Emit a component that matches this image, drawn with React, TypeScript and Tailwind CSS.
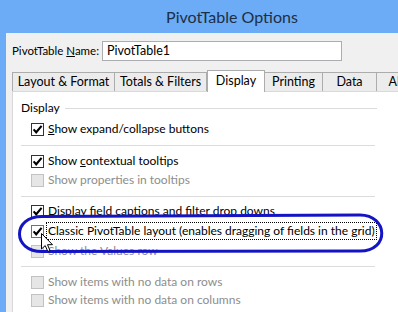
import React from "react"

const font = { fontFamily: 'Lato, "Noto Sans", sans-serif' }

function Check({ checked, disabled, focus }: { checked?: boolean; disabled?: boolean; focus?: boolean }) {
  const box = disabled
    ? "border-[#c2c2c2] bg-[#e6e6e6]"
    : focus
      ? "border-[#3c7fb1] bg-white"
      : "border-[#333333] bg-white"
  return (
    <span className={`flex h-[13px] w-[13px] shrink-0 items-center justify-center border ${box}`}>
      {checked && (
        <svg width="11" height="11" viewBox="0 0 11 11">
          <path d="M1.6 5.4 L4.2 8.3 L9.6 1.9" fill="none" stroke="#000" strokeWidth="2.1" />
        </svg>
      )}
    </span>
  )
}

function Row({
  children,
  checked,
  disabled,
  focus,
  className = "",
}: {
  children: React.ReactNode
  checked?: boolean
  disabled?: boolean
  focus?: boolean
  className?: string
}) {
  return (
    <div className={`flex h-[18px] items-center pl-[18px] ${className}`}>
      <Check checked={checked} disabled={disabled} focus={focus} />
      <span
        className={`ml-[2px] block h-[18px] whitespace-nowrap px-[2px] text-[12px] leading-[18px] ${
          disabled ? "text-[#8d8d8d]" : "text-black"
        } ${focus ? "outline outline-1 outline-dotted outline-black -outline-offset-1" : ""}`}
      >
        {children}
      </span>
    </div>
  )
}

const Sep = ({ className = "" }: { className?: string }) => (
  <div className={`ml-[8px] h-px w-[354px] bg-[#dcdcdc] ${className}`} />
)

const tabs = [
  { label: "Layout & Format", w: "w-[103px]" },
  { label: "Totals & Filters", w: "w-[92px]" },
  { label: "Display", w: "w-[58px]", active: true },
  { label: "Printing", w: "w-[58px]" },
  { label: "Data", w: "w-[54px]" },
  { label: "Alt", w: "w-[40px]" },
]

export default function App() {
  return (
    <div className="relative flex h-[312px] w-[398px] flex-col overflow-hidden bg-[#6cabf5]" style={font}>
      <div className="flex h-[33px] shrink-0 items-center justify-center pl-[66px] text-[16px] text-[#1d2f45]">
        PivotTable Options
      </div>
      <div className="ml-[6px] flex flex-1 flex-col bg-[#f0f0f0] pl-[6px] pt-[8px]">
        <div className="flex h-[20px] items-center">
          <span className="w-[87px] shrink-0 whitespace-nowrap text-[11.5px] text-black">
            PivotTable <span className="underline">N</span>ame:
          </span>
          <div className="ml-[3px] flex h-[20px] w-[240px] items-center border border-[#abadb3] bg-white pl-[4px] text-[12.5px] text-black">
            PivotTable1
          </div>
        </div>
        <div className="mt-[8px] flex h-[22px] items-end">
          {tabs.map((t) =>
            t.active ? (
              <div
                key={t.label}
                className={`relative z-10 -mb-px flex h-[22px] ${t.w} shrink-0 items-center justify-center border border-b-0 border-[#acacac] bg-white text-[12.5px] text-black`}
              >
                {t.label}
              </div>
            ) : (
              <div
                key={t.label}
                className={`flex h-[19px] ${t.w} shrink-0 items-center justify-center whitespace-nowrap border border-l-0 border-b-0 border-[#acacac] bg-[#ececec] text-[12.5px] text-black first:border-l`}
              >
                {t.label}
              </div>
            ),
          )}
        </div>
        <div className="flex flex-1 flex-col border-l border-t border-[#d9d9d9] bg-white">
          <div className="mt-[7px] flex h-[18px] items-center pl-[8px]">
            <span className="text-[12px] text-black">Display</span>
            <div className="ml-[5px] h-px w-[312px] bg-[#dcdcdc]" />
          </div>
          <Row checked className="mt-[3px]">
            <span className="underline">S</span>how expand/collapse buttons
          </Row>
          <Sep className="mt-[7px]" />
          <Row checked className="mt-[6px]">
            Show <span className="underline">c</span>ontextual tooltips
          </Row>
          <Row disabled className="mt-[1px]">
            Show properties in tooltips
          </Row>
          <Sep className="mt-[7px]" />
          <Row checked className="mt-[5px]">
            Display field captions and filter drop downs
          </Row>
          <Row checked focus className="mt-[2px]">
            Classic PivotTable layout (enables dragging of fields in the grid)
          </Row>
          <Row disabled className="mt-[2px]">
            Show the Values row
          </Row>
          <Sep className="mt-[6px]" />
          <Row disabled className="mt-[6px]">
            Show items with no data on rows
          </Row>
          <Row disabled>Show items with no data on columns</Row>
        </div>
      </div>

      {/* annotation ellipse */}
      <svg className="pointer-events-none absolute left-0 top-0" width="398" height="312">
        <path
          d="M42 216.5 L360 215 C388 215 390 251 360 251 L42 251.5 C12 251.5 12 216.5 42 216.5 Z"
          fill="none"
          stroke="#1414c4"
          strokeWidth="3"
        />
      </svg>

      {/* mouse cursor */}
      <svg className="pointer-events-none absolute left-[41px] top-[233px]" width="13" height="20" viewBox="0 0 13 20">
        <path
          d="M0.5 0.5 L0.5 16 L4.2 12.6 L6.8 18.5 L9 17.5 L6.5 11.7 L11.5 11.7 Z"
          fill="#fff"
          stroke="#000"
          strokeWidth="1"
        />
      </svg>
    </div>
  )
}
